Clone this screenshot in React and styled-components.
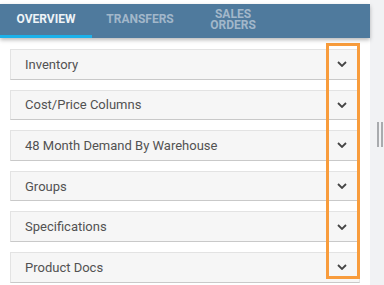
import React from "react";
import styled, { createGlobalStyle } from "styled-components";

const Global = createGlobalStyle`
  html, body { margin: 0; padding: 0; background: #fff; }
  body { font-family: Roboto, "Liberation Sans", sans-serif; }
`;

const Page = styled.div`
  display: flex;
  width: 384px;
  height: 285px;
  overflow: hidden;
  position: relative;
`;

const Main = styled.div`
  width: 370px;
  flex: none;
  background: #fff;
  padding-top: 4px;
  box-sizing: border-box;
`;

const Side = styled.div`
  flex: 1;
  background: #f1f2f4;
  display: flex;
  justify-content: flex-end;
  padding-top: 122px;
  padding-right: 1px;
  box-sizing: border-box;
`;

const Handle = styled.div`
  display: flex;
  gap: 2px;
  height: 25px;
`;

const HandleBar = styled.div`
  width: 2px;
  height: 100%;
  background: #a9abae;
`;

const TabBar = styled.div`
  display: flex;
  height: 34px;
  background: #4f7a9d;
  box-shadow: 0 2px 4px rgba(0, 0, 0, 0.28);
  position: relative;
  z-index: 1;
`;

const Tab = styled.div`
  width: ${(p) => p.$w}px;
  flex: none;
  display: flex;
  align-items: center;
  justify-content: center;
  text-align: center;
  box-sizing: border-box;
  padding-top: 1px;
  font-size: 12px;
  font-weight: 700;
  line-height: 11.5px;
  text-transform: uppercase;
  color: ${(p) => (p.$active ? "#eef3f7" : "#a2b7ca")};
  border-bottom: 3px solid ${(p) => (p.$active ? "#1cb1ea" : "transparent")};
`;

const List = styled.div`
  display: flex;
  flex-direction: column;
  gap: 10px;
  padding: 11px 10px 0 10px;
`;

const Card = styled.div`
  height: 30.6px;
  box-sizing: border-box;
  display: flex;
  align-items: center;
  justify-content: space-between;
  background: #f6f6f6;
  border: 1px solid #e3e3e3;
  border-bottom-color: #c9c9c9;
  padding: 0 12px 0 14px;
  font-size: 13px;
  color: #525252;
`;

const Chevron = () => (
  <svg width="10" height="6" viewBox="0 0 10 6">
    <path d="M1 1 L5 5 L9 1" fill="none" stroke="#454545" strokeWidth="1.8" />
  </svg>
);

const Highlight = styled.div`
  position: absolute;
  left: 326px;
  top: 43px;
  width: 34px;
  height: 236px;
  box-sizing: border-box;
  border: 3px solid #f89c3c;
  pointer-events: none;
`;

const sections = [
  "Inventory",
  "Cost/Price Columns",
  "48 Month Demand By Warehouse",
  "Groups",
  "Specifications",
  "Product Docs",
];

export default function App() {
  return (
    <>
      <Global />
      <Page>
        <Main>
          <TabBar>
            <Tab $w={92} $active>Overview</Tab>
            <Tab $w={96}>Transfers</Tab>
            <Tab $w={90}>Sales<br />Orders</Tab>
          </TabBar>
          <List>
            {sections.map((s) => (
              <Card key={s}>
                <span>{s}</span>
                <Chevron />
              </Card>
            ))}
          </List>
        </Main>
        <Side>
          <Handle>
            <HandleBar />
            <HandleBar />
          </Handle>
        </Side>
        <Highlight />
      </Page>
    </>
  );
}
